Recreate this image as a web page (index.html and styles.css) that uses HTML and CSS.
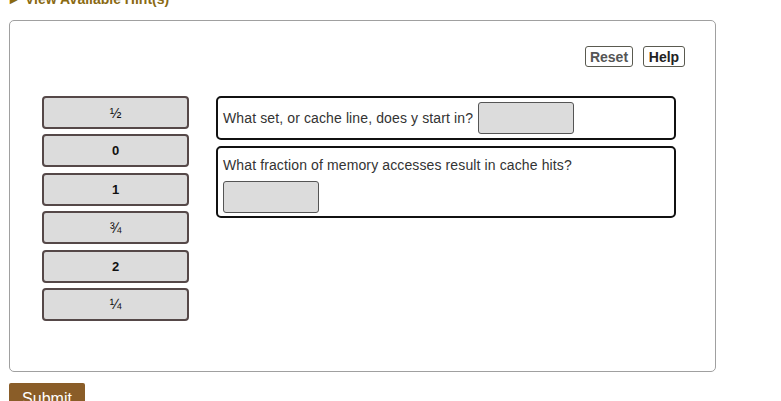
FILE: index.html
```html
<!DOCTYPE html>
<html lang="en">
<head>
  <meta charset="UTF-8">
  <title>Cache Question</title>
  <link rel="stylesheet" href="styles.css">
</head>
<body>

  <div class="hint-link"><span class="caret">&#9656;</span>View Available Hint(s)</div>

  <div class="question-panel">
    <div class="toolbar">
      <button class="tool-btn reset">Reset</button>
      <button class="tool-btn help">Help</button>
    </div>

    <div class="workspace">
      <div class="tiles">
        <div class="tile frac">&frac12;</div>
        <div class="tile">0</div>
        <div class="tile">1</div>
        <div class="tile frac">&frac34;</div>
        <div class="tile">2</div>
        <div class="tile frac">&frac14;</div>
      </div>

      <div class="targets">
        <div class="target one-line">
          <span>What set, or cache line, does y start in?</span>
          <div class="drop-box"></div>
        </div>
        <div class="target">
          <div>What fraction of memory accesses result in cache hits?</div>
          <div class="drop-box"></div>
        </div>
      </div>
    </div>
  </div>

  <button class="submit-btn">Submit</button>

</body>
</html>
```

FILE: styles.css
```css
* {
  margin: 0;
  padding: 0;
  box-sizing: border-box;
}

body {
  font-family: Arial, "Liberation Sans", sans-serif;
  background: #fff;
  padding: 0 9px;
  overflow: hidden;
  color: #333;
}

.hint-link {
  margin-top: -11px;
  height: 20px;
  line-height: 20px;
  padding-left: 1px;
  font-size: 14px;
  font-weight: bold;
  color: #8a6a12;
}

.caret {
  margin-right: 8px;
}

.question-panel {
  margin-top: 11px;
  width: 707px;
  height: 352px;
  border: 1px solid #a0a0a0;
  border-radius: 5px;
  padding: 25px 30px 0 32px;
}

.toolbar {
  display: flex;
  justify-content: flex-end;
  gap: 10px;
}

.tool-btn {
  height: 21px;
  padding: 0;
  font-family: Arial, "Liberation Sans", sans-serif;
  font-size: 14px;
  font-weight: bold;
  background: #fff;
  border: 1px solid #5a5a50;
  border-radius: 3px;
}

.reset {
  width: 48px;
  color: #555;
}

.help {
  width: 42px;
  color: #222;
}

.workspace {
  display: flex;
  gap: 27px;
  margin-top: 29px;
}

.tiles {
  display: flex;
  flex-direction: column;
  gap: 5.4px;
  width: 147px;
}

.tile {
  height: 33px;
  display: flex;
  align-items: center;
  justify-content: center;
  background: #dcdcdc;
  border: 2px solid #554848;
  border-radius: 4px;
  font-size: 13px;
  font-weight: bold;
  color: #111;
}

.tile.frac {
  font-weight: normal;
  font-size: 14px;
}

.targets {
  display: flex;
  flex-direction: column;
  gap: 6px;
  width: 460px;
}

.target {
  border: 2px solid #111;
  border-radius: 5px;
  padding: 9px 5px 3px;
  font-size: 14px;
  letter-spacing: 0.12px;
  color: #333;
  height: 72px;
}

.target .drop-box {
  margin-top: 8px;
}

.target.one-line {
  display: flex;
  align-items: center;
  gap: 5px;
  height: 44px;
  padding: 4px 5px;
}

.target.one-line .drop-box {
  margin-top: 0;
}

.drop-box {
  width: 96px;
  height: 32px;
  background: #dcdcdc;
  border: 1.5px solid #555;
  border-radius: 3px;
}

.submit-btn {
  margin-top: 11px;
  width: 76px;
  height: 32px;
  background: #8a5d28;
  color: #fff;
  border: none;
  border-radius: 2px;
  font-family: Arial, "Liberation Sans", sans-serif;
  font-size: 16px;
  text-align: center;
}
```
